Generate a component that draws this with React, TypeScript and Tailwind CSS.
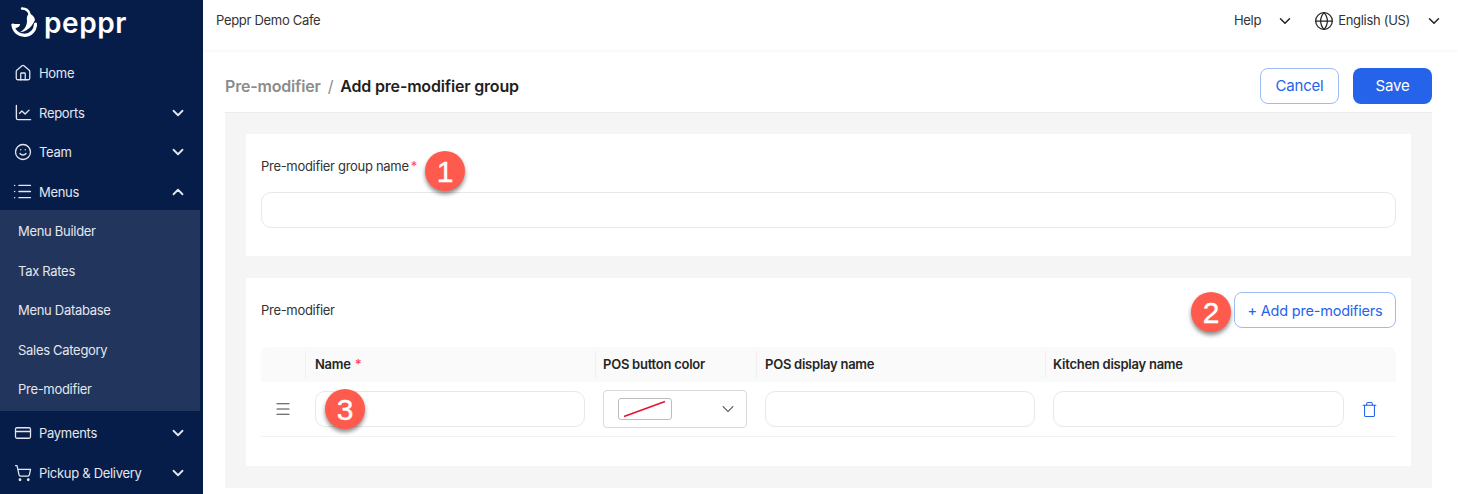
import React from "react";
import {
  ChevronDown,
  ChevronUp,
  CreditCard,
  Globe,
  House,
  List,
  Menu,
  ShoppingCart,
  Smile,
  Trash,
  ChartLine,
} from "lucide-react";

const font = "font-['Inter','Liberation_Sans',sans-serif]";
const small = "text-[13px] tracking-[-0.3px]";

function Logo() {
  return (
    <div className="flex h-[53.4px] items-start pl-[11px] pt-[7px]">
      <svg width="26" height="30" viewBox="0 0 26 30" fill="none" className="shrink-0">
        <path d="M11 1.500C14.500 1.500 17.500 3.500 18.500 7" stroke="#fff" strokeWidth="2.4" strokeLinecap="round" />
        <path d="M18 6.500C21.500 7.500 23.500 10 24 13C22 17 20 20.500 15 23.500C13 24.500 11 25 9 25C13 23 16 19 16 14C15.500 11 16 8 18 6.500Z" fill="#fff" />
        <path d="M2 18C3 25 8 28.300 13.500 28.300C20 28.300 24.500 23 24.500 17" stroke="#fff" strokeWidth="3.200" strokeLinecap="round" />
        <path d="M0.500 17H9C9 20 5.500 21.500 2.500 21Z" fill="#fff" />
      </svg>
      <span className="ml-[7px] mt-[2px] text-[28px] leading-[28px] font-semibold tracking-[0.6px] text-white">peppr</span>
    </div>
  );
}

function NavRow({ icon, label, open }: { icon: React.ReactNode; label: string; open?: boolean }) {
  return (
    <div className={`flex h-[39.6px] items-center pl-[14px] pr-[16px] text-[#e4e7ee] ${small}`}>
      <span className="flex w-[25px] shrink-0 justify-start">{icon}</span>
      <span className="flex-1 pt-[1.5px]">{label}</span>
      {open === undefined ? null : open ? (
        <ChevronUp size={18} strokeWidth={2.4} />
      ) : (
        <ChevronDown size={18} strokeWidth={2.4} />
      )}
    </div>
  );
}

function Sidebar() {
  const iconProps = { size: 18, strokeWidth: 1.7 };
  return (
    <aside className="flex w-[203px] shrink-0 flex-col bg-[#071d49]">
      <Logo />
      <NavRow icon={<House {...iconProps} />} label="Home" />
      <NavRow icon={<ChartLine size={19} strokeWidth={1.7} />} label="Reports" open={false} />
      <NavRow icon={<Smile {...iconProps} />} label="Team" open={false} />
      <NavRow icon={<List size={21} strokeWidth={1.7} className="-ml-[2px]" />} label="Menus" open />
      <div className="mr-[3px] -mt-[1.5px] bg-[#22355c] pt-[1px] pb-[1.7px]">
        {["Menu Builder", "Tax Rates", "Menu Database", "Sales Category", "Pre-modifier"].map((item) => (
          <div key={item} className={`flex h-[39.6px] items-center pl-[18px] pt-[1.5px] text-[#e4e7ee] ${small}`}>
            {item}
          </div>
        ))}
      </div>
      <div className="h-[2.2px]" />
      <NavRow icon={<CreditCard {...iconProps} />} label="Payments" open={false} />
      <NavRow icon={<ShoppingCart {...iconProps} />} label="Pickup & Delivery" open={false} />
    </aside>
  );
}

function Badge({ n, className }: { n: number; className: string }) {
  return (
    <div
      className={`absolute flex h-[40px] w-[40px] items-center justify-center rounded-full bg-[#ff5a4e] text-[30px] font-normal text-white shadow-[0_3px_4px_rgba(0,0,0,0.45)] [-webkit-text-stroke:0.35px_white] font-['Liberation_Sans',sans-serif] ${className}`}
    >
      {n}
    </div>
  );
}

function TextInput({ className = "" }: { className?: string }) {
  return <div className={`h-[36px] rounded-[10px] border border-[#e8e8e8] bg-white ${className}`} />;
}

function Header() {
  return (
    <header className={`flex h-[50px] shrink-0 items-center justify-between pb-[8px] pl-[13px] pr-[15px] text-[#333] shadow-[0_1px_3px_rgba(0,0,0,0.05)] ${small}`}>
      <span>Peppr Demo Cafe</span>
      <div className="flex items-center">
        <span>Help</span>
        <ChevronDown size={18} strokeWidth={2} className="ml-[15px] text-[#222]" />
        <Globe size={20} strokeWidth={1.5} className="ml-[20px] text-[#222]" />
        <span className="ml-[4px]">English (US)</span>
        <ChevronDown size={18} strokeWidth={2} className="ml-[15px] text-[#222]" />
      </div>
    </header>
  );
}

function TableHead() {
  const cols = [
    { label: "", pad: "pl-[9px]" },
    { label: "Name", pad: "pl-[9px]" },
    { label: "POS button color", pad: "pl-[7px]" },
    { label: "POS display name", pad: "pl-[8px]" },
    { label: "Kitchen display name", pad: "pl-[7px]" },
  ];
  return (
    <div className="grid h-[35px] grid-cols-[44px_290px_161px_289px_351px] items-center rounded-t-lg bg-[#fafafa] text-[13px] font-semibold tracking-[-0.25px] text-[#262626]">
      {cols.map((col, i) => (
        <div key={col.label} className={`flex h-[27px] items-center ${col.pad} ${i > 0 ? "border-l border-[#f0f0f0]" : ""}`}>
          {col.label}
          {col.label === "Name" && <span className="ml-[4px] text-[#ff4d4f]">*</span>}
        </div>
      ))}
    </div>
  );
}

function TableRow() {
  return (
    <div className="grid h-[55px] grid-cols-[44px_290px_161px_289px_351px] items-center border-b border-[#f3f3f3]">
      <div className="flex justify-center">
        <Menu size={18} strokeWidth={1.5} className="text-[#444]" />
      </div>
      <div className="px-[10px]">
        <TextInput />
      </div>
      <div className="pl-[8px] pr-[9px]">
        <div className="flex h-[38px] items-center justify-between rounded border border-[#d9d9d9] pl-[14px] pr-[8px]">
          <div className="h-[22px] w-[54px] rounded-[3px] border border-[#bdbdbd]">
            <svg viewBox="0 0 52 20" className="h-full w-full">
              <line x1="5" y1="17.500" x2="46" y2="2.500" stroke="#e8112d" strokeWidth="1.500" />
            </svg>
          </div>
          <ChevronDown size={20} strokeWidth={1.25} className="text-[#333]" />
        </div>
      </div>
      <div className="pl-[9px] pr-[10px]">
        <TextInput />
      </div>
      <div className="flex items-center pl-[8px]">
        <TextInput className="w-[291px]" />
        <Trash size={17} strokeWidth={1.5} className="ml-[17px] text-[#2563eb]" />
      </div>
    </div>
  );
}

export default function App() {
  return (
    <div className={`flex h-[494px] w-[1458px] overflow-hidden bg-white ${font}`}>
      <Sidebar />
      <main className="flex min-w-0 flex-1 flex-col">
        <Header />
        <div className="flex flex-col pl-[22px] pr-[26px]">
          <div className="flex h-[63px] items-center justify-between border-b border-[#ececec] pt-[9px]">
            <div className="text-[16px] font-semibold tracking-[-0.18px]">
              <span className="text-[#8c8c8c]">Pre-modifier</span>
              <span className="mx-[7px] font-normal text-[#8c8c8c]">/</span>
              <span className="text-[#1f1f1f]">Add pre-modifier group</span>
            </div>
            <div className="flex gap-[14px] text-[15px] tracking-[-0.2px]">
              <button className="h-[36px] w-[79px] rounded-lg border border-[#9dbcf7] bg-white pt-[2px] text-[#2563eb]">Cancel</button>
              <button className="h-[36px] w-[79px] rounded-lg bg-[#2563eb] pt-[2px] text-white">Save</button>
            </div>
          </div>
          <div className="flex h-[375px] flex-col gap-[22px] bg-[#f5f5f5] px-[21px] pt-[21px]">
            <section className="relative h-[122px] bg-white px-[15px] pt-[23px]">
              <div className={`leading-[18px] text-[#333] ${small}`}>
                Pre-modifier group name<span className="ml-[2px] text-[#ff4d4f]">*</span>
              </div>
              <TextInput className="mt-[17px]" />
              <Badge n={1} className="left-[179px] top-[17px]" />
            </section>
            <section className="relative h-[188px] bg-white px-[15px] pt-[14px]">
              <div className="flex h-[36px] items-center justify-between">
                <span className={`pt-[2px] text-[#333] ${small}`}>Pre-modifier</span>
                <button className="h-[36px] w-[162px] rounded-lg border border-[#9dbcf7] bg-white pt-[2px] text-[14.5px] tracking-[-0.2px] text-[#2563eb]">
                  + Add pre-modifiers
                </button>
              </div>
              <div className="mt-[19px]">
                <TableHead />
                <TableRow />
              </div>
              <Badge n={2} className="left-[945px] top-[14px]" />
              <Badge n={3} className="left-[79px] top-[111px]" />
            </section>
          </div>
        </div>
      </main>
    </div>
  );
}
